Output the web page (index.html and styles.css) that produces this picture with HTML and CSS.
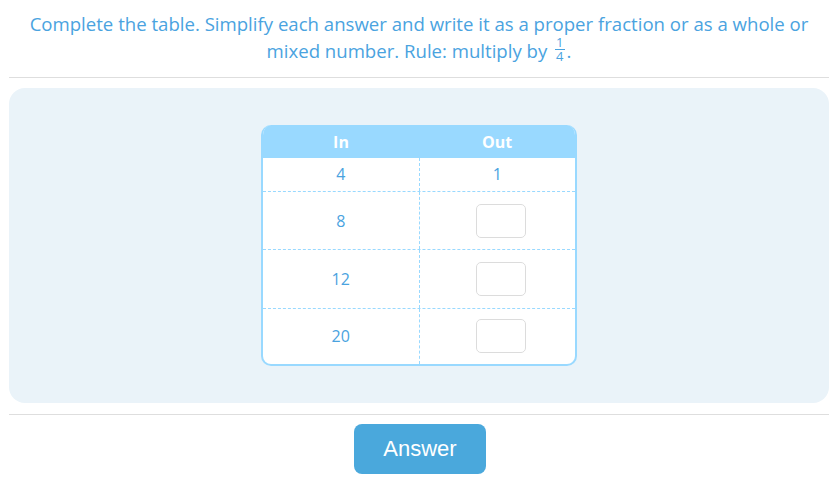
FILE: index.html
```html
<!DOCTYPE html>
<html>
<head>
<meta charset="utf-8">
<link rel="stylesheet" href="styles.css">
</head>
<body>
<div class="question">
  Complete the table. Simplify each answer and write it as a proper fraction or as a whole or mixed number. Rule: multiply by <span class="frac"><span class="num">1</span><span class="den">4</span></span>.
</div>
<hr class="rule">
<div class="panel">
  <div class="table">
    <div class="row head"><div class="cell">In</div><div class="cell">Out</div></div>
    <div class="row first"><div class="cell">4</div><div class="cell">1</div></div>
    <div class="row"><div class="cell">8</div><div class="cell"><div class="box"></div></div></div>
    <div class="row"><div class="cell">12</div><div class="cell"><div class="box"></div></div></div>
    <div class="row last"><div class="cell">20</div><div class="cell"><div class="box"></div></div></div>
  </div>
</div>
<hr class="rule rule2">
<div class="actions"><button class="answer">Answer</button></div>
</body>
</html>
```

FILE: styles.css
```css
html, body { margin: 0; padding: 0; background: #fff; }
body { font-family: "Open Sans", Lato, sans-serif; color: #4aa3df; }
.question {
  padding: 11px 22px 0 20px;
  height: 67px;
  box-sizing: border-box;
  text-align: center;
  font-size: 18.6px;
  line-height: 26px;
  color: #4aa3df;
}
.frac { display: inline-flex; flex-direction: column; vertical-align: 11px; font-size: 13px; line-height: 11px; text-align: center; margin: 0 2px 0 3px; }
.frac .num { border-bottom: 1px solid #4aa3df; padding: 0 1px 1px; }
.frac .den { padding-top: 1px; }
.rule { margin: 10px 11px 0 9px; border: 0; border-top: 1px solid #dedede; height: 0; }
.rule2 { margin-top: 11px; }
.panel {
  margin: 10px 11px 0 9px;
  height: 315px;
  background: #eaf3f9;
  border-radius: 16px;
  display: flex;
  justify-content: center;
  padding-top: 37px;
  box-sizing: border-box;
}
.table {
  width: 316px;
  height: 241px;
  box-sizing: border-box;
  border: 2px solid #99d9ff;
  border-top: 0;
  border-radius: 10px;
  background: #fff;
  overflow: hidden;
  display: flex;
  flex-direction: column;
}
.row { display: flex; height: 58px; border-top: 1px dashed #99d9ff; }
.row .cell { flex: 1; display: flex; align-items: center; justify-content: center; font-size: 16px; color: #4aa3df; }
.row .cell:first-child { border-right: 1px dashed #99d9ff; }
.row.head { height: 33px; background: #99d9ff; border-top: 0; }
.row.head .cell { color: #fff; font-weight: bold; border-right: 0; padding-top: 2px; }
.row.first { height: 34px; border-top: 0; }
.row.last { height: 56px; }
.box { width: 50px; height: 34px; box-sizing: border-box; border: 1px solid #dcdcdc; border-radius: 5px; background: #fff; margin-left: 8px; }
.actions { display: flex; justify-content: center; padding-top: 9px; }
.answer {
  width: 132px; height: 50px;
  background: #4aa8dc; color: #fff;
  border: 0; border-radius: 8px;
  font-family: "Liberation Sans", Arial, sans-serif;
  font-size: 22px;
  padding: 0;
}
```
